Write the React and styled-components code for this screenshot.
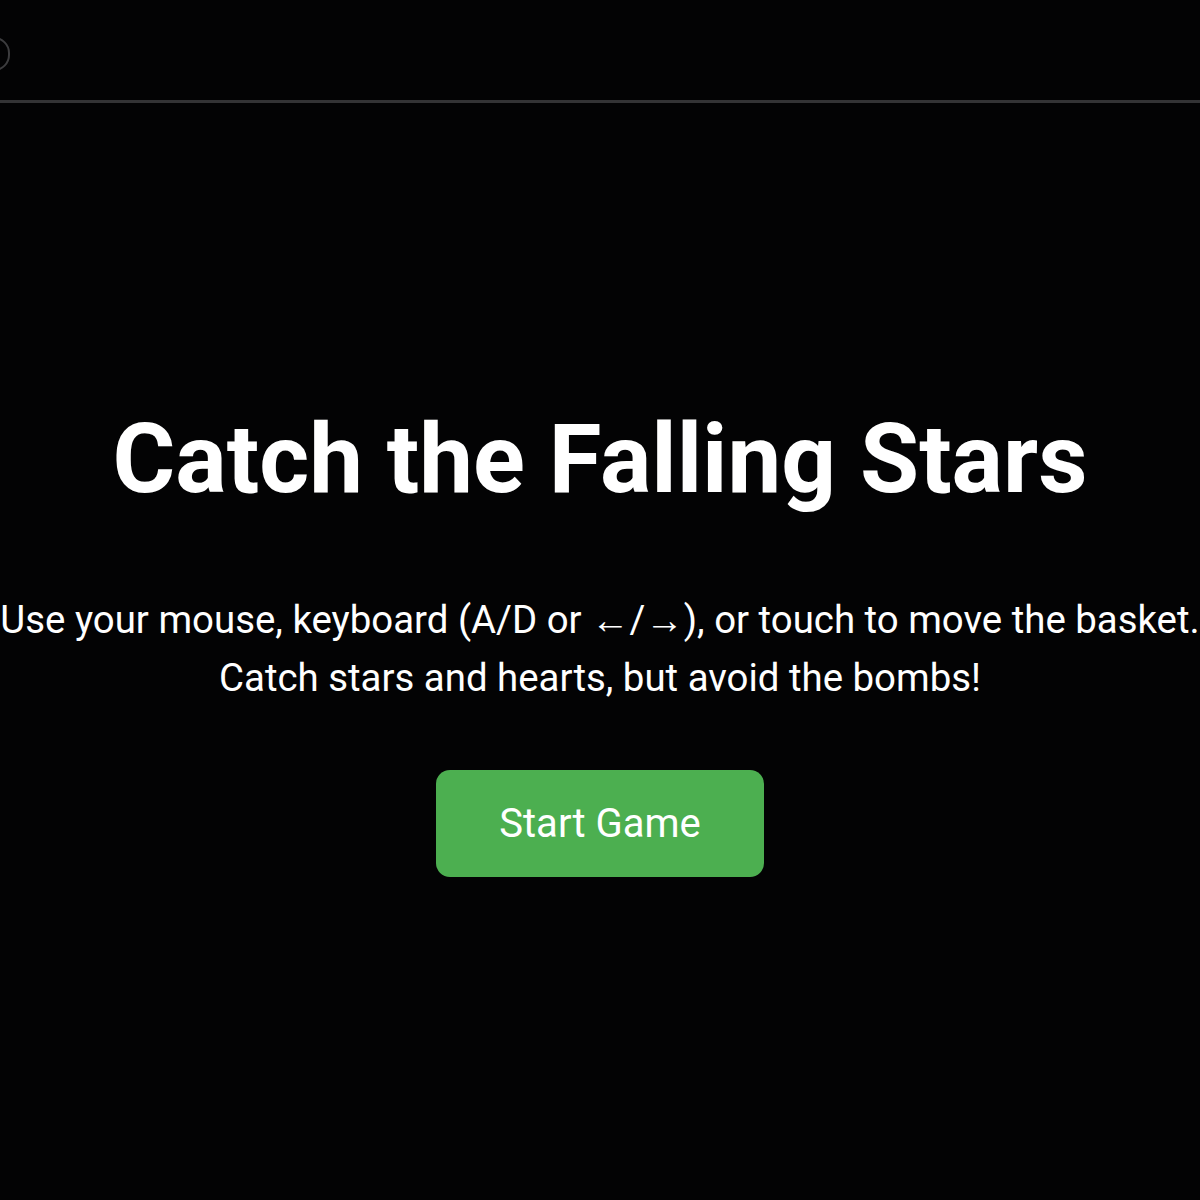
import React from 'react';
import styled, { createGlobalStyle } from 'styled-components';

//============== CSS - basics =================
const GlobalStyle = createGlobalStyle`
    html, body {
        margin: 0;
        padding: 0;
        background: #030304;
    }
    body {
        font-family: Roboto, 'Liberation Sans', sans-serif;
        color: white;
        overflow: hidden;
    }
`;

const Page = styled.div`
    width: 1200px;
    height: 1200px;
    display: flex;
    flex-direction: column;
    background: #030304;
`;

const TopBar = styled.div`
    height: 100px;
    border-bottom: 3px solid #333335;
    display: flex;
    align-items: flex-start;
    overflow: hidden;
`;

// what's left of the score pill, pushed off the left edge
const ScorePill = styled.div`
    width: 44px;
    height: 30px;
    margin-top: 37px;
    margin-left: -38px;
    border: 2px solid #3c3c3e;
    border-radius: 16px;
    flex-shrink: 0;
`;

const Screen = styled.div`
    display: flex;
    flex-direction: column;
    align-items: center;
    padding-top: 299px;
`;

const Title = styled.h1`
    margin: 0;
    font-size: 96px;
    line-height: 115px;
    font-weight: 700;
    color: #ffffff;
    text-align: center;
`;

const Help = styled.p`
    margin: 74px 0 0;
    font-size: 38.4px;
    line-height: 58px;
    font-weight: 400;
    text-align: center;
    white-space: nowrap;
`;

//============== CSS - buttons =================
const StartButton = styled.button`
    margin-top: 63px;
    width: 328px;
    height: 107px;
    border: none;
    border-radius: 14px;
    background: #4caf50;
    color: white;
    font-family: Roboto, 'Liberation Sans', sans-serif;
    font-size: 40px;
    cursor: pointer;
    transition: .2s all;

    &:hover {
        background: #43a047;
    }
`;

function App() {
    return (
        <Page>
            <GlobalStyle />
            <TopBar>
                <ScorePill />
            </TopBar>
            <Screen>
                <Title>Catch the Falling Stars</Title>
                <Help>
                    Use your mouse, keyboard (A/D or ←/→), or touch to move the basket.
                    <br />
                    Catch stars and hearts, but avoid the bombs!
                </Help>
                <StartButton>Start Game</StartButton>
            </Screen>
        </Page>
    );
}

export default App;
